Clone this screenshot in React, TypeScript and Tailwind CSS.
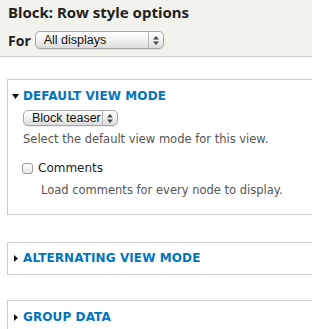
import React from 'react';

function MacSelect({ label, width, textPad }: { label: string; width: string; textPad: string }) {
  return (
    <div
      className={`flex ${width} h-full items-stretch rounded-[5px] border border-[#a6a6a6] bg-gradient-to-b from-[#ffffff] via-[#f1f1f1] to-[#dcdcdc] shadow-[0_1px_1px_rgba(0,0,0,0.08)]`}
      style={{ fontFamily: '"Liberation Sans", Arial, sans-serif' }}
    >
      <span className={`flex-1 ${textPad} flex items-center text-[12.5px] leading-none text-[#111]`}>{label}</span>
      <span className="flex w-[15px] flex-col items-center justify-center border-l border-[#b5b5b5]">
        <svg width="6" height="9" viewBox="0 0 6 9">
          <path d="M3 0 L6 3.5 H0 Z" fill="#444" />
          <path d="M0 5.5 H6 L3 9 Z" fill="#444" />
        </svg>
      </span>
    </div>
  );
}

function Legend({ open, title }: { open: boolean; title: string }) {
  return (
    <div className="flex h-[18px] items-center">
      <span className="flex w-[11px] justify-start">
        {open ? (
          <svg width="7" height="5" viewBox="0 0 7 5">
            <path d="M0 0 H7 L3.5 5 Z" fill="#111" />
          </svg>
        ) : (
          <svg width="4" height="7" viewBox="0 0 4 7" className="ml-[2px]">
            <path d="M0 0 L4 3.5 L0 7 Z" fill="#111" />
          </svg>
        )}
      </span>
      <span className="text-[12px] font-bold uppercase tracking-[0.1px] text-[#0074bd]">{title}</span>
    </div>
  );
}

export default function App() {
  return (
    <div
      className="h-[329px] w-[312px] overflow-hidden bg-white"
      style={{ fontFamily: '"DejaVu Sans", Verdana, sans-serif' }}
    >
      <div
        className="border-b border-[#cccccc] bg-[#f3f3ee] px-2 pb-[7px] pt-[3px]"
        style={{ fontFamily: '"Noto Sans", "DejaVu Sans", sans-serif' }}
      >
        <h1 className="h-[18px] text-[15px] font-bold leading-[18px] text-[#222]">Block: Row style options</h1>
        <div className="mt-[10px] flex h-[18px] items-center gap-[4px]">
          <span className="text-[14px] font-bold text-[#222]">For</span>
          <MacSelect label="All displays" width="w-[129px]" textPad="pl-[8px]" />
        </div>
      </div>

      <div className="ml-[7px] mr-[-20px] mt-[22px] border border-[#cccccc] pb-[15px] pl-[4px] pt-[7px]">
        <Legend open title="Default view mode" />
        <div className="ml-[11px] mt-[5px] h-[16px]">
          <MacSelect label="Block teaser" width="w-[95px]" textPad="pl-[8px]" />
        </div>
        <p className="ml-[11px] mt-[4px] h-[18px] text-[11.5px] leading-[18px] text-[#555]">
          Select the default view mode for this view.
        </p>
        <label className="ml-[10px] mt-[11px] flex h-[18px] items-center gap-[5px]">
          <span className="h-[11px] w-[11px] rounded-[3px] border border-[#9a9a9a] bg-gradient-to-b from-[#ffffff] to-[#e6e6e6]" />
          <span className="text-[12px] text-[#222]">Comments</span>
        </label>
        <p className="ml-[29px] mt-[4px] h-[18px] text-[11.5px] leading-[18px] text-[#555]">
          Load comments for every node to display.
        </p>
      </div>

      <div className="ml-[7px] mr-[-20px] mt-[27px] border border-[#cccccc] pb-[7px] pl-[4px] pt-[6px]">
        <Legend open={false} title="Alternating view mode" />
      </div>

      <div className="ml-[7px] mr-[-20px] mt-[25px] border border-[#cccccc] pb-[7px] pl-[4px] pt-[7px]">
        <Legend open={false} title="Group data" />
      </div>
    </div>
  );
}
